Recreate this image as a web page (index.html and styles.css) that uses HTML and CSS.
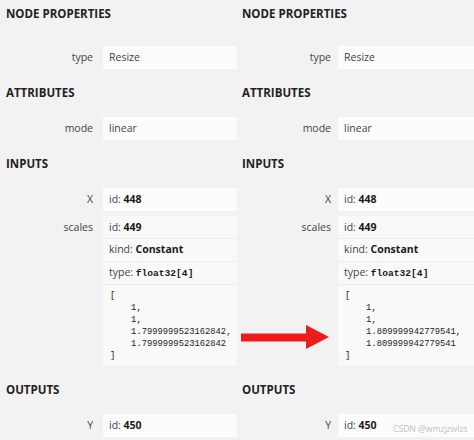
FILE: index.html
```html
<!DOCTYPE html>
<html>
<head>
<meta charset="utf-8">
<link rel="stylesheet" href="styles.css">
</head>
<body>
<div class="page">
  <section class="panel">
    <h2 class="hdr first">NODE PROPERTIES</h2>
    <div class="row"><div class="lbl">type</div><div class="val"><div class="item">Resize</div></div></div>
    <h2 class="hdr">ATTRIBUTES</h2>
    <div class="row"><div class="lbl">mode</div><div class="val"><div class="item">linear</div></div></div>
    <h2 class="hdr">INPUTS</h2>
    <div class="row"><div class="lbl">X</div><div class="val"><div class="item">id: <b>448</b></div></div></div>
    <div class="row"><div class="lbl">scales</div><div class="val multi"><div class="item">id: <b>449</b></div><div class="item">kind: <b>Constant</b></div><div class="item">type: <code>float32[4]</code></div><pre class="arr">[
    1,
    1,
    1.7999999523162842,
    1.7999999523162842
]</pre></div></div>
    <h2 class="hdr">OUTPUTS</h2>
    <div class="row"><div class="lbl">Y</div><div class="val"><div class="item">id: <b>450</b></div></div></div>
  </section>
  <section class="panel right">
    <h2 class="hdr first">NODE PROPERTIES</h2>
    <div class="row"><div class="lbl">type</div><div class="val"><div class="item">Resize</div></div></div>
    <h2 class="hdr">ATTRIBUTES</h2>
    <div class="row"><div class="lbl">mode</div><div class="val"><div class="item">linear</div></div></div>
    <h2 class="hdr">INPUTS</h2>
    <div class="row"><div class="lbl">X</div><div class="val"><div class="item">id: <b>448</b></div></div></div>
    <div class="row"><div class="lbl">scales</div><div class="val multi"><div class="item">id: <b>449</b></div><div class="item">kind: <b>Constant</b></div><div class="item">type: <code>float32[4]</code></div><pre class="arr">[
    1,
    1,
    1.809999942779541,
    1.809999942779541
]</pre></div></div>
    <h2 class="hdr">OUTPUTS</h2>
    <div class="row"><div class="lbl">Y</div><div class="val"><div class="item">id: <b>450</b></div></div></div>
  </section>
  <svg class="arrow" width="88" height="24" viewBox="0 0 88 24"><rect x="0" y="8.5" width="67" height="8" fill="#ec1c1c"/><polygon points="65,0 88,12 65,24" fill="#ec1c1c"/></svg>
  <div class="watermark">CSDN @wmzjzwlzs</div>
</div>
</body>
</html>
```

FILE: styles.css
```css
* { box-sizing: border-box; }
html, body { margin: 0; padding: 0; }
body {
  background: #f2f2f2;
  font-family: "Open Sans", "Noto Sans", sans-serif;
  font-size: 10.5px;
  color: #333;
  width: 474px;
  height: 440px;
  overflow: hidden;
}
.page {
  position: relative;
  display: grid;
  grid-template-columns: 237px 237px;
  width: 474px;
  height: 440px;
  overflow: hidden;
}
.panel {
  display: flex;
  flex-direction: column;
  min-width: 0;
}
.hdr {
  margin: 0;
  font-size: 11.5px;
  font-weight: 700;
  color: #222;
  line-height: 16px;
  padding: 16px 6px;
}
.hdr.first { padding: 6px 6px 24px; }
.right .hdr { padding-left: 5px; }
.right .hdr.first { padding-left: 5px; }
.row {
  display: flex;
  align-items: flex-start;
}
.row + .row { margin-top: 5px; }
.lbl {
  width: 93px;
  flex: none;
  text-align: right;
  line-height: 15px;
  padding-top: 4px;
  color: #444;
}
.right .lbl { width: 94px; }
.val {
  margin-left: 10px;
  flex: 1;
  min-width: 0;
  background: #fcfcfc;
}
.right .val { margin-left: 7px; }
.item {
  line-height: 15px;
  padding: 4px 6px;
  height: 23px;
  white-space: nowrap;
  color: #444;
}
.item b { font-weight: 700; color: #1a1a1a; }
.multi { background: #f9f9f9; }
.multi .item { height: 23px; border-bottom: 1px solid #ececec; padding: 3px 6px 4px; }
.multi .item:first-child { padding-top: 4px; }
code {
  font-family: "Liberation Mono", "DejaVu Sans Mono", monospace;
  font-size: 9.6px;
  font-weight: 700;
  color: #1a1a1a;
}
.arr {
  margin: 0;
  height: 81px;
  white-space: pre;
  font-family: "Liberation Mono", "DejaVu Sans Mono", monospace;
  font-size: 8.8px;
  line-height: 12px;
  padding: 5px 7px 4px;
  color: #222;
}
.arrow {
  position: absolute;
  left: 241px;
  top: 325px;
}
.watermark {
  position: absolute;
  left: 393px;
  top: 423px;
  font-size: 8.6px;
  white-space: nowrap;
  color: #c2c2c2;
  font-family: "Open Sans", "Noto Sans", sans-serif;
}
```
